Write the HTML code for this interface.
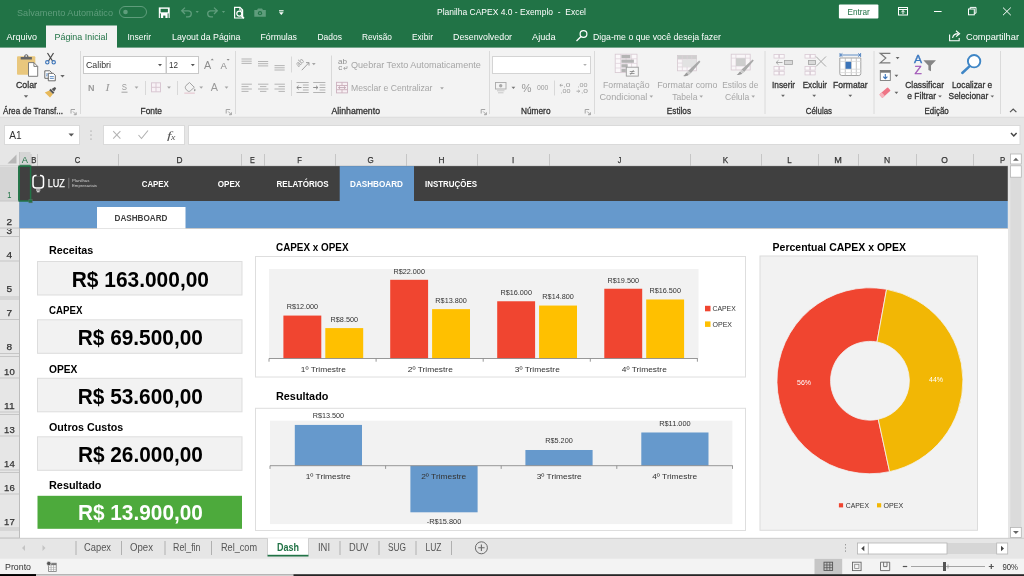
<!DOCTYPE html>
<html><head><meta charset="utf-8"><title>Planilha CAPEX 4.0 - Exemplo - Excel</title>
<style>
html,body{margin:0;padding:0;background:#fff;overflow:hidden}
body{width:1024px;height:576px;font-family:"Liberation Sans",sans-serif}
svg{display:block;font-family:"Liberation Sans",sans-serif;will-change:transform;transform:translateZ(0)}
text{white-space:pre}
</style></head><body>
<svg width="1024" height="576" viewBox="0 0 1024 576">
<rect x="0" y="0" width="1024" height="576" fill="#ffffff" />
<rect x="0" y="0" width="1024" height="48.1" fill="#217346" />
<rect x="0" y="47.6" width="1024" height="69.4" fill="#f3f3f3" />
<rect x="0" y="117" width="1024" height="35.5" fill="#e6e6e6" />
<line x1="0" y1="117.2" x2="1024" y2="117.2" stroke="#d9d9d9" stroke-width="0.8" />
<rect x="46" y="25.5" width="71" height="24" fill="#f3f3f3" />
<text x="17" y="16" font-size="9.8" fill="#5f9d7c" textLength="96" lengthAdjust="spacingAndGlyphs" >Salvamento Automático</text>
<rect x="119.5" y="6.5" width="27" height="11" rx="5.5" fill="none" stroke="#5f9d7c"/>
<circle cx="125.5" cy="12" r="2.3" fill="#5f9d7c"/>
<rect x="158.8" y="7.4" width="10.9" height="10.6" fill="#fff" />
<rect x="160.6" y="8.8" width="7.3" height="3.5" fill="#217346" />
<rect x="159.9" y="13.4" width="1" height="4.6" fill="#217346" />
<rect x="167.6" y="13.4" width="1" height="4.6" fill="#217346" />
<rect x="163.2" y="15.6" width="2.2" height="2.4" fill="#217346" />
<path d="M182 10.8h6.3a3 3 0 0 1 0 6h-2.3 M185 7.6l-3.3 3.2 3.3 3.2" fill="none" stroke="#5f9d7c" stroke-width="1.3" />
<path d="M195.6 11l1.6 2 1.6-2z" fill="#5f9d7c" />
<path d="M217 10.8h-6.3a3 3 0 0 0 0 6h2.3 M214 7.6l3.3 3.2-3.3 3.2" fill="none" stroke="#5f9d7c" stroke-width="1.3" />
<path d="M221.9 11l1.6 2 1.6-2z" fill="#5f9d7c" />
<path d="M234.6 7.4h5.4l2.6 2.6v8h-8z" fill="none" stroke="#fff" stroke-width="1.2" />
<path d="M239.8 7.4v2.8h2.8" fill="none" stroke="#fff" stroke-width="0.9" />
<circle cx="239.3" cy="13.6" r="2.5" fill="#217346" stroke="#fff" stroke-width="1.2"/>
<line x1="241.2" y1="15.6" x2="244" y2="18.4" stroke="#fff" stroke-width="1.5" />
<path d="M254.3 10h2.7l1-1.6h4l1 1.6h2.8v6.8h-11.5z" fill="#5f9d7c" />
<circle cx="260" cy="13.2" r="2.1" fill="#217346"/>
<circle cx="260" cy="13.2" r="1" fill="#5f9d7c"/>
<line x1="279" y1="10.8" x2="283.6" y2="10.8" stroke="#fff" stroke-width="1.1" />
<path d="M279 12.3h4.6l-2.3 2.6z" fill="#fff" />
<text x="437" y="15.1" font-size="9.8" fill="#fff" textLength="149" lengthAdjust="spacingAndGlyphs" >Planilha CAPEX 4.0 - Exemplo  -  Excel</text>
<rect x="838.9" y="4.5" width="39.5" height="14" fill="#fff" rx="1"/>
<text x="847.5" y="15" font-size="9.8" fill="#217346" textLength="22.3" lengthAdjust="spacingAndGlyphs" >Entrar</text>
<rect x="898.5" y="7.5" width="9" height="7.5" fill="none" stroke="#fff" stroke-width="1" />
<line x1="898.5" y1="9.5" x2="907.5" y2="9.5" stroke="#fff" stroke-width="1" />
<path d="M903 10.5v3.5 M901.3 12.3l1.7-1.8 1.7 1.8" fill="none" stroke="#fff" stroke-width="1" />
<line x1="934" y1="11.5" x2="941.6" y2="11.5" stroke="#fff" stroke-width="1" />
<rect x="968.5" y="9" width="5.8" height="5.8" fill="none" stroke="#fff" stroke-width="1" />
<path d="M970.2 9v-1.6h5.8v5.8h-1.7" fill="none" stroke="#fff" stroke-width="1" />
<path d="M1003 7.6l7.8 7.6 M1010.8 7.6l-7.8 7.6" fill="none" stroke="#fff" stroke-width="1" />
<text x="6.5" y="40" font-size="9.8" fill="#fff" textLength="30.5" lengthAdjust="spacingAndGlyphs" >Arquivo</text>
<text x="54.5" y="40" font-size="9.8" fill="#217346" textLength="53" lengthAdjust="spacingAndGlyphs" >Página Inicial</text>
<text x="127.5" y="40" font-size="9.8" fill="#fff" textLength="23.5" lengthAdjust="spacingAndGlyphs" >Inserir</text>
<text x="172" y="40" font-size="9.8" fill="#fff" textLength="68.5" lengthAdjust="spacingAndGlyphs" >Layout da Página</text>
<text x="260.5" y="40" font-size="9.8" fill="#fff" textLength="36.5" lengthAdjust="spacingAndGlyphs" >Fórmulas</text>
<text x="317.5" y="40" font-size="9.8" fill="#fff" textLength="24.5" lengthAdjust="spacingAndGlyphs" >Dados</text>
<text x="362" y="40" font-size="9.8" fill="#fff" textLength="30" lengthAdjust="spacingAndGlyphs" >Revisão</text>
<text x="412" y="40" font-size="9.8" fill="#fff" textLength="21" lengthAdjust="spacingAndGlyphs" >Exibir</text>
<text x="453" y="40" font-size="9.8" fill="#fff" textLength="59" lengthAdjust="spacingAndGlyphs" >Desenvolvedor</text>
<text x="532" y="40" font-size="9.8" fill="#fff" textLength="23.5" lengthAdjust="spacingAndGlyphs" >Ajuda</text>
<circle cx="583.5" cy="34" r="3.4" fill="none" stroke="#fff" stroke-width="1.2"/>
<line x1="581" y1="36.5" x2="576.5" y2="41" stroke="#fff" stroke-width="1.3" />
<text x="593" y="40" font-size="9.8" fill="#fff" textLength="128" lengthAdjust="spacingAndGlyphs" >Diga-me o que você deseja fazer</text>
<path d="M949.6 34.5v6.2h9.6v-2.6 M952.6 38c.4-3 2.6-4.4 5.6-4.4 M956 30.8l3.6 2.9-3.6 2.9" fill="none" stroke="#fff" stroke-width="1.1" />
<text x="966" y="40" font-size="9.8" fill="#fff" textLength="53" lengthAdjust="spacingAndGlyphs" >Compartilhar</text>
<rect x="4.5" y="125.5" width="75" height="19" fill="#fff" stroke="#dadada" stroke-width="1" />
<text x="9.2" y="138.6" font-size="10.2" fill="#333" textLength="12.4" lengthAdjust="spacingAndGlyphs" >A1</text>
<path d="M68.5 133.5h5.5l-2.75 3z" fill="#555" />
<rect x="90.5" y="130.5" width="1" height="1.2" fill="#9a9a9a" />
<rect x="90.5" y="134.5" width="1" height="1.2" fill="#9a9a9a" />
<rect x="90.5" y="138.5" width="1" height="1.2" fill="#9a9a9a" />
<rect x="103.5" y="125.5" width="81" height="19" fill="#fff" stroke="#dadada" stroke-width="1" />
<path d="M113.2 131.2l7.2 7.4 M120.4 131.2l-7.2 7.4" fill="none" stroke="#b4b4b4" stroke-width="1.1" />
<path d="M138.5 135l3 3.5 6.5-8" fill="none" stroke="#b0b0b0" stroke-width="1.1" />
<text x="167" y="139" font-size="11" fill="#555" font-style="italic" textLength="4.5" lengthAdjust="spacingAndGlyphs" font-family="Liberation Serif">f</text>
<text x="171" y="140" font-size="7.5" fill="#555" font-style="italic" textLength="4.4" lengthAdjust="spacingAndGlyphs" font-family="Liberation Serif">x</text>
<rect x="188.5" y="125.5" width="831.5" height="19" fill="#fff" stroke="#dadada" stroke-width="1" />
<path d="M1011 133l2.8 2.9 2.8-2.9" fill="none" stroke="#444" stroke-width="1.5" />
<rect x="17" y="56.3" width="18.3" height="18.4" fill="#e9c77d" rx="1"/>
<path d="M20.7 59.5v-2.6h3.4c0-3.4 4.4-3.4 4.4 0h3.4v2.6z" fill="#666" />
<rect x="25.5" y="55.3" width="1.6" height="1.4" fill="#f3f3f3" />
<path d="M28.5 62.6h5.4l3.8 3.8v9.9h-9.2z" fill="#fff" stroke="#6f6f6f" stroke-width="0.9" />
<path d="M33.9 62.6v3.8h3.8" fill="none" stroke="#6f6f6f" stroke-width="0.9" />
<text x="16" y="88" font-size="9.8" fill="#303030" stroke="#303030" stroke-width="0.3" textLength="21" lengthAdjust="spacingAndGlyphs" >Colar</text>
<path d="M23.8 95.3h4.4l-2.2 2.5z" fill="#666" />
<path d="M47.5 53l5 8 M53.5 53l-5 8" fill="none" stroke="#4a4a4a" stroke-width="1.2" />
<circle cx="47.3" cy="62.3" r="1.7" fill="none" stroke="#3b74b9" stroke-width="1.1"/>
<circle cx="53.7" cy="62.3" r="1.7" fill="none" stroke="#3b74b9" stroke-width="1.1"/>
<path d="M44.8 70.8h5l1.7 1.7v5.8h-6.7z" fill="#fff" stroke="#5c5c5c" stroke-width="0.9" />
<path d="M48.3 73.3h5l2 2v5.5h-7z" fill="#fff" stroke="#5c5c5c" stroke-width="0.9" />
<line x1="49.8" y1="76.6" x2="53.8" y2="76.6" stroke="#3b74b9" stroke-width="0.8" />
<line x1="49.8" y1="78.4" x2="53.8" y2="78.4" stroke="#3b74b9" stroke-width="0.8" />
<line x1="46" y1="74" x2="48" y2="74" stroke="#3b74b9" stroke-width="0.8" />
<line x1="46" y1="75.8" x2="47.6" y2="75.8" stroke="#3b74b9" stroke-width="0.8" />
<path d="M60.3 75.1h4.4l-2.2 2.5z" fill="#666" />
<path d="M44.8 92.6l4.6-2.2 3.6 3.6-3 3.6z" fill="#e7b95a" />
<path d="M49.2 90.2l1.4-1.4 3.8 3.8-1.4 1.4z" fill="#555" />
<path d="M51.6 88.9l3.2-2 1.4 1.4-2 3.2z" fill="#555" />
<text x="3" y="113.9" font-size="9.8" fill="#303030" stroke="#303030" stroke-width="0.3" textLength="60" lengthAdjust="spacingAndGlyphs" >Área de Transf...</text>
<path d="M71 113.5v-4h4" fill="none" stroke="#9c9c9c" stroke-width="0.9" />
<path d="M73 111.5l3 3 M76.2 112.3v2.4h-2.4" fill="none" stroke="#9c9c9c" stroke-width="0.9" />
<line x1="80.5" y1="51" x2="80.5" y2="114" stroke="#dadada" stroke-width="1" />
<rect x="83.5" y="56.5" width="82.5" height="17" fill="#fff" stroke="#c8c8c8" stroke-width="1" />
<rect x="166.5" y="56.5" width="32" height="17" fill="#fff" stroke="#c8c8c8" stroke-width="1" />
<text x="86" y="68" font-size="9.8" fill="#333" textLength="25" lengthAdjust="spacingAndGlyphs" >Calibri</text>
<path d="M158 64h4l-2 2.3z" fill="#555" />
<text x="169" y="68" font-size="9.8" fill="#333" textLength="9" lengthAdjust="spacingAndGlyphs" >12</text>
<path d="M190.8 64h4l-2 2.3z" fill="#555" />
<text x="204" y="69" font-size="10.5" fill="#8c8c8c" textLength="7.2" lengthAdjust="spacingAndGlyphs" >A</text>
<path d="M210.6 60.2l1.6-1.8 1.6 1.8z" fill="#8c8c8c" />
<text x="220.5" y="69" font-size="9.2" fill="#8c8c8c" textLength="6.4" lengthAdjust="spacingAndGlyphs" >A</text>
<path d="M226.6 59l1.5 1.7 1.5-1.7z" fill="#8c8c8c" />
<text x="88" y="90.5" font-size="9.4" fill="#9a9a9a" font-weight="700" textLength="6.5" lengthAdjust="spacingAndGlyphs" >N</text>
<text x="105.5" y="90.5" font-size="9.4" fill="#9a9a9a" font-style="italic" textLength="4" lengthAdjust="spacingAndGlyphs" font-family="Liberation Serif">I</text>
<text x="121.8" y="90.3" font-size="9.4" fill="#9a9a9a" textLength="5.2" lengthAdjust="spacingAndGlyphs" >S</text>
<line x1="121.5" y1="92.2" x2="127.5" y2="92.2" stroke="#9a9a9a" stroke-width="0.9" />
<path d="M134.6 86.6h3.8l-1.9 2.2z" fill="#a6a6a6" />
<line x1="145.5" y1="81" x2="145.5" y2="95" stroke="#d8d8d8" stroke-width="1" />
<rect x="151.5" y="82.8" width="9" height="9" fill="#f8f2f6" stroke="#d9c8d3" stroke-width="1" />
<line x1="156" y1="82.8" x2="156" y2="91.8" stroke="#d9c8d3" stroke-width="1" />
<line x1="151.5" y1="87.3" x2="160.5" y2="87.3" stroke="#d9c8d3" stroke-width="1" />
<path d="M167.1 86.6h3.8l-1.9 2.2z" fill="#a6a6a6" />
<line x1="177.5" y1="81" x2="177.5" y2="95" stroke="#d8d8d8" stroke-width="1" />
<path d="M186 85.5l3.5-3 4.8 4.8-4 3.6c-1 .8-2.2.6-2.9-.1l-1.6-1.8c-.7-.9-.7-2.5.2-3.5z" fill="none" stroke="#9a9a9a" stroke-width="0.9" />
<path d="M194.8 88.6c.8 1.2 1.2 2 .1 2.6-.9.3-1.5-.7-.1-2.6z" fill="#9a9a9a" />
<rect x="184.3" y="92.4" width="10.5" height="1.6" fill="#e9d3da" />
<path d="M199.3 86.6h3.8l-1.9 2.2z" fill="#a6a6a6" />
<text x="210.8" y="91" font-size="10.5" fill="#9a9a9a" textLength="7.2" lengthAdjust="spacingAndGlyphs" >A</text>
<path d="M224.6 86.6h3.8l-1.9 2.2z" fill="#a6a6a6" />
<text x="140.5" y="113.9" font-size="9.8" fill="#303030" stroke="#303030" stroke-width="0.3" textLength="21.5" lengthAdjust="spacingAndGlyphs" >Fonte</text>
<path d="M226.2 113.5v-4h4" fill="none" stroke="#9c9c9c" stroke-width="0.9" />
<path d="M228.2 111.5l3 3 M231.4 112.3v2.4h-2.4" fill="none" stroke="#9c9c9c" stroke-width="0.9" />
<line x1="235.5" y1="51" x2="235.5" y2="114" stroke="#dadada" stroke-width="1" />
<line x1="241.5" y1="59" x2="251.7" y2="59" stroke="#adadad" stroke-width="0.9" />
<line x1="241.5" y1="61.2" x2="251.7" y2="61.2" stroke="#adadad" stroke-width="0.9" />
<line x1="241.5" y1="63.4" x2="251.7" y2="63.4" stroke="#adadad" stroke-width="0.9" />
<line x1="258" y1="61.5" x2="268.2" y2="61.5" stroke="#adadad" stroke-width="0.9" />
<line x1="258" y1="63.7" x2="268.2" y2="63.7" stroke="#adadad" stroke-width="0.9" />
<line x1="258" y1="65.9" x2="268.2" y2="65.9" stroke="#adadad" stroke-width="0.9" />
<line x1="274.5" y1="65.6" x2="284.7" y2="65.6" stroke="#adadad" stroke-width="0.9" />
<line x1="274.5" y1="67.8" x2="284.7" y2="67.8" stroke="#adadad" stroke-width="0.9" />
<line x1="274.5" y1="70" x2="284.7" y2="70" stroke="#adadad" stroke-width="0.9" />
<line x1="291.5" y1="56.5" x2="291.5" y2="72.5" stroke="#d8d8d8" stroke-width="1" />
<text x="0" y="0" font-size="7.6" fill="#969696" textLength="8.4" lengthAdjust="spacingAndGlyphs" transform="translate(298.6,67.2) rotate(-45)">ab</text>
<path d="M301.8 70.2l7-7.4 M309 65.6v-3h-3" fill="none" stroke="#969696" stroke-width="0.9" />
<path d="M311.9 63.1h3.8l-1.9 2.2z" fill="#a6a6a6" />
<line x1="331.5" y1="55.5" x2="331.5" y2="96" stroke="#d8d8d8" stroke-width="1" />
<text x="338" y="64.4" font-size="8" fill="#8f8f8f" textLength="9" lengthAdjust="spacingAndGlyphs" >ab</text>
<text x="338.2" y="70.4" font-size="8" fill="#8f8f8f" textLength="4" lengthAdjust="spacingAndGlyphs" >c</text>
<path d="M347 66.2v2.2h-3.2 M345.2 67l-1.5 1.4 1.5 1.4" fill="none" stroke="#9a9a9a" stroke-width="0.8" />
<text x="351" y="67.8" font-size="9.8" fill="#a6a6a6" textLength="129.8" lengthAdjust="spacingAndGlyphs" >Quebrar Texto Automaticamente</text>
<line x1="241.5" y1="84.2" x2="251.9" y2="84.2" stroke="#adadad" stroke-width="0.9" />
<line x1="258" y1="84.2" x2="268.4" y2="84.2" stroke="#adadad" stroke-width="0.9" />
<line x1="274.5" y1="84.2" x2="284.9" y2="84.2" stroke="#adadad" stroke-width="0.9" />
<line x1="241.5" y1="86.6" x2="248.5" y2="86.6" stroke="#adadad" stroke-width="0.9" />
<line x1="260" y1="86.6" x2="266.4" y2="86.6" stroke="#adadad" stroke-width="0.9" />
<line x1="278.5" y1="86.6" x2="284.9" y2="86.6" stroke="#adadad" stroke-width="0.9" />
<line x1="241.5" y1="89" x2="251.9" y2="89" stroke="#adadad" stroke-width="0.9" />
<line x1="258" y1="89" x2="268.4" y2="89" stroke="#adadad" stroke-width="0.9" />
<line x1="274.5" y1="89" x2="284.9" y2="89" stroke="#adadad" stroke-width="0.9" />
<line x1="241.5" y1="91.4" x2="248.5" y2="91.4" stroke="#adadad" stroke-width="0.9" />
<line x1="260" y1="91.4" x2="266.4" y2="91.4" stroke="#adadad" stroke-width="0.9" />
<line x1="278.5" y1="91.4" x2="284.9" y2="91.4" stroke="#adadad" stroke-width="0.9" />
<line x1="291.5" y1="80" x2="291.5" y2="96" stroke="#d8d8d8" stroke-width="1" />
<line x1="296.5" y1="82.5" x2="308.7" y2="82.5" stroke="#adadad" stroke-width="0.9" />
<line x1="296.5" y1="92.5" x2="308.7" y2="92.5" stroke="#adadad" stroke-width="0.9" />
<line x1="302.9" y1="85" x2="308.7" y2="85" stroke="#adadad" stroke-width="0.9" />
<line x1="302.9" y1="87.5" x2="308.7" y2="87.5" stroke="#adadad" stroke-width="0.9" />
<line x1="302.9" y1="90" x2="308.7" y2="90" stroke="#adadad" stroke-width="0.9" />
<path d="M301.5 87.5h-4.6 M298.7 85.7l-1.9 1.8 1.9 1.8" fill="none" stroke="#858585" stroke-width="0.9" />
<line x1="313.2" y1="82.5" x2="325.4" y2="82.5" stroke="#adadad" stroke-width="0.9" />
<line x1="313.2" y1="92.5" x2="325.4" y2="92.5" stroke="#adadad" stroke-width="0.9" />
<line x1="319.6" y1="85" x2="325.4" y2="85" stroke="#adadad" stroke-width="0.9" />
<line x1="319.6" y1="87.5" x2="325.4" y2="87.5" stroke="#adadad" stroke-width="0.9" />
<line x1="319.6" y1="90" x2="325.4" y2="90" stroke="#adadad" stroke-width="0.9" />
<path d="M313.2 87.5h4.6 M316 85.7l1.9 1.8-1.9 1.8" fill="none" stroke="#858585" stroke-width="0.9" />
<rect x="336.5" y="82.3" width="11" height="10.6" fill="#f8f0f4" stroke="#cdb3c0" stroke-width="0.9" />
<line x1="336.5" y1="85.5" x2="347.5" y2="85.5" stroke="#c9aeb9" stroke-width="0.9" />
<line x1="336.5" y1="89.7" x2="347.5" y2="89.7" stroke="#c9aeb9" stroke-width="0.9" />
<line x1="342" y1="82.3" x2="342" y2="85.5" stroke="#c9aeb9" stroke-width="0.9" />
<line x1="342" y1="89.7" x2="342" y2="92.9" stroke="#c9aeb9" stroke-width="0.9" />
<path d="M338.5 87.6h7 M340 86.4l-1.4 1.2 1.4 1.2 M344 86.4l1.4 1.2-1.4 1.2" fill="none" stroke="#b89aa8" stroke-width="0.8" />
<text x="351" y="91.4" font-size="9.8" fill="#a6a6a6" textLength="81.5" lengthAdjust="spacingAndGlyphs" >Mesclar e Centralizar</text>
<path d="M440.1 87.3h3.8l-1.9 2.2z" fill="#a6a6a6" />
<text x="331.5" y="113.9" font-size="9.8" fill="#303030" stroke="#303030" stroke-width="0.3" textLength="48.5" lengthAdjust="spacingAndGlyphs" >Alinhamento</text>
<path d="M481.2 113.5v-4h4" fill="none" stroke="#9c9c9c" stroke-width="0.9" />
<path d="M483.2 111.5l3 3 M486.4 112.3v2.4h-2.4" fill="none" stroke="#9c9c9c" stroke-width="0.9" />
<line x1="489.5" y1="51" x2="489.5" y2="114" stroke="#dadada" stroke-width="1" />
<rect x="492.5" y="56.5" width="98" height="17" fill="#fff" stroke="#d4d4d4" stroke-width="1" />
<path d="M583.2 64h3.6l-1.8 2.1z" fill="#b0b0b0" />
<rect x="495.5" y="82.5" width="10.5" height="6.5" fill="#f3f3f3" stroke="#a9a9a9" stroke-width="0.9" />
<circle cx="500.7" cy="85.7" r="1.7" fill="#a9a9a9"/>
<line x1="497" y1="90.8" x2="504.5" y2="90.8" stroke="#c2c2c2" stroke-width="0.9" />
<line x1="498" y1="92.8" x2="503.5" y2="92.8" stroke="#c2c2c2" stroke-width="0.9" />
<path d="M511.5 86.8h3.8l-1.9 2.2z" fill="#777" />
<text x="521.5" y="92" font-size="11" fill="#9a9a9a" textLength="10" lengthAdjust="spacingAndGlyphs" >%</text>
<text x="537" y="90" font-size="7" fill="#9a9a9a" textLength="11.4" lengthAdjust="spacingAndGlyphs" >000</text>
<line x1="554.5" y1="80.5" x2="554.5" y2="95.5" stroke="#d8d8d8" stroke-width="1" />
<text x="563.5" y="87" font-size="6.2" fill="#9a9a9a" textLength="7" lengthAdjust="spacingAndGlyphs" >,0</text>
<text x="560.5" y="92.8" font-size="6.2" fill="#9a9a9a" textLength="10" lengthAdjust="spacingAndGlyphs" >,00</text>
<path d="M563 85.3h-3 M561.2 84l-1.4 1.3 1.4 1.3" fill="none" stroke="#9a9a9a" stroke-width="0.8" />
<text x="577.5" y="87" font-size="6.2" fill="#9a9a9a" textLength="10" lengthAdjust="spacingAndGlyphs" >,00</text>
<text x="581" y="92.8" font-size="6.2" fill="#9a9a9a" textLength="7" lengthAdjust="spacingAndGlyphs" >,0</text>
<path d="M576.5 91.2h3 M578.3 89.9l1.4 1.3-1.4 1.3" fill="none" stroke="#9a9a9a" stroke-width="0.8" />
<text x="521" y="113.9" font-size="9.8" fill="#303030" stroke="#303030" stroke-width="0.3" textLength="29.5" lengthAdjust="spacingAndGlyphs" >Número</text>
<path d="M585.2 113.5v-4h4" fill="none" stroke="#9c9c9c" stroke-width="0.9" />
<path d="M587.2 111.5l3 3 M590.4 112.3v2.4h-2.4" fill="none" stroke="#9c9c9c" stroke-width="0.9" />
<line x1="594.5" y1="51" x2="594.5" y2="114" stroke="#dadada" stroke-width="1" />
<rect x="615.2" y="54.2" width="21.8" height="18.4" fill="#fbf8fa" stroke="#d6c8d0" stroke-width="0.8" />
<line x1="620.65" y1="54.2" x2="620.65" y2="72.6" stroke="#ddd0d8" stroke-width="0.7" />
<line x1="626.1" y1="54.2" x2="626.1" y2="72.6" stroke="#ddd0d8" stroke-width="0.7" />
<line x1="631.55" y1="54.2" x2="631.55" y2="72.6" stroke="#ddd0d8" stroke-width="0.7" />
<line x1="615.2" y1="58.8" x2="637" y2="58.8" stroke="#ddd0d8" stroke-width="0.7" />
<line x1="615.2" y1="63.4" x2="637" y2="63.4" stroke="#ddd0d8" stroke-width="0.7" />
<line x1="615.2" y1="68" x2="637" y2="68" stroke="#ddd0d8" stroke-width="0.7" />
<rect x="621.4" y="55" width="9" height="3.2" fill="#b4b4b4" />
<rect x="621.4" y="59.6" width="12.5" height="3.2" fill="#b4b4b4" />
<rect x="621.4" y="64.2" width="6.3" height="3.2" fill="#b4b4b4" />
<rect x="621.4" y="68.8" width="4.4" height="3.2" fill="#b4b4b4" />
<rect x="626.3" y="67.2" width="12" height="8.9" fill="#f6f6f6" stroke="#9c9c9c" stroke-width="0.9" />
<text x="629.6" y="74.6" font-size="8" fill="#808080" textLength="5.4" lengthAdjust="spacingAndGlyphs" >≠</text>
<text x="603" y="88.2" font-size="9.8" fill="#a6a6a6" textLength="46.5" lengthAdjust="spacingAndGlyphs" >Formatação</text>
<text x="599.5" y="99.7" font-size="9.8" fill="#a6a6a6" textLength="47.8" lengthAdjust="spacingAndGlyphs" >Condicional</text>
<path d="M649.5 95.6h3.6l-1.8 2.1z" fill="#a6a6a6" />
<rect x="677.6" y="55.4" width="19" height="15.4" fill="#f9f6f8" stroke="#d6c8d0" stroke-width="0.8" />
<rect x="677.6" y="55.4" width="19" height="3.6" fill="#cfcfcf" />
<line x1="682.35" y1="55.4" x2="682.35" y2="70.8" stroke="#ddd0d8" stroke-width="0.7" />
<line x1="687.1" y1="55.4" x2="687.1" y2="70.8" stroke="#ddd0d8" stroke-width="0.7" />
<line x1="691.85" y1="55.4" x2="691.85" y2="70.8" stroke="#ddd0d8" stroke-width="0.7" />
<line x1="677.6" y1="59.25" x2="696.6" y2="59.25" stroke="#ddd0d8" stroke-width="0.7" />
<line x1="677.6" y1="63.1" x2="696.6" y2="63.1" stroke="#ddd0d8" stroke-width="0.7" />
<line x1="677.6" y1="66.95" x2="696.6" y2="66.95" stroke="#ddd0d8" stroke-width="0.7" />
<rect x="682.4" y="59.3" width="14" height="7.6" fill="#e2e2e2" />
<path d="M699.2 60.6l1.2 1.2-9.6 11.4-2.6-2.4z" fill="#a9a9a9" />
<path d="M688.2 70.8l2.6 2.4-1.6 1.6-2.4-2.4z" fill="#c9c9c9" />
<path d="M686.6 72.6l2.2 2.2c-1.6 1.6-3.6 1.6-5.6 1.2 1.6-.6 1.8-2 3.4-3.4z" fill="#9a9a9a" />
<text x="657.2" y="88.2" font-size="9.8" fill="#a6a6a6" textLength="60.2" lengthAdjust="spacingAndGlyphs" >Formatar como</text>
<text x="672.2" y="99.7" font-size="9.8" fill="#a6a6a6" textLength="25.2" lengthAdjust="spacingAndGlyphs" >Tabela</text>
<path d="M699.4 95.6h3.6l-1.8 2.1z" fill="#a6a6a6" />
<rect x="731.2" y="54.2" width="19" height="15.8" fill="#f9f6f8" stroke="#d6c8d0" stroke-width="0.8" />
<line x1="735.95" y1="54.2" x2="735.95" y2="70" stroke="#ddd0d8" stroke-width="0.7" />
<line x1="745.45" y1="54.2" x2="745.45" y2="70" stroke="#ddd0d8" stroke-width="0.7" />
<line x1="731.2" y1="58.15" x2="750.2" y2="58.15" stroke="#ddd0d8" stroke-width="0.7" />
<line x1="731.2" y1="66.05" x2="750.2" y2="66.05" stroke="#ddd0d8" stroke-width="0.7" />
<rect x="736" y="58.2" width="9.5" height="7.8" fill="#cdcdcd" />
<path d="M752.6 59.4l1.2 1.2-9.6 11.4-2.6-2.4z" fill="#a9a9a9" />
<path d="M741.6 69.6l2.6 2.4-1.6 1.6-2.4-2.4z" fill="#c9c9c9" />
<path d="M740 71.4l2.2 2.2c-1.6 1.6-3.6 1.6-5.6 1.2 1.6-.6 1.8-2 3.4-3.4z" fill="#9a9a9a" />
<text x="722.3" y="88.2" font-size="9.8" fill="#a6a6a6" textLength="36" lengthAdjust="spacingAndGlyphs" >Estilos de</text>
<text x="725" y="99.7" font-size="9.8" fill="#a6a6a6" textLength="24.3" lengthAdjust="spacingAndGlyphs" >Célula</text>
<path d="M751.4 95.6h3.6l-1.8 2.1z" fill="#a6a6a6" />
<text x="666.8" y="113.9" font-size="9.8" fill="#303030" stroke="#303030" stroke-width="0.3" textLength="24.2" lengthAdjust="spacingAndGlyphs" >Estilos</text>
<line x1="765" y1="51" x2="765" y2="114" stroke="#dadada" stroke-width="1" />
<rect x="774" y="54.5" width="4.8" height="3.6" fill="#fbf8fa" stroke="#d9cad4" stroke-width="0.8" />
<rect x="779.4" y="54.5" width="4.8" height="3.6" fill="#fbf8fa" stroke="#d9cad4" stroke-width="0.8" />
<rect x="774" y="66.5" width="4.8" height="3.6" fill="#fbf8fa" stroke="#d9cad4" stroke-width="0.8" />
<rect x="779.4" y="66.5" width="4.8" height="3.6" fill="#fbf8fa" stroke="#d9cad4" stroke-width="0.8" />
<rect x="774" y="71.3" width="4.8" height="3.6" fill="#fbf8fa" stroke="#d9cad4" stroke-width="0.8" />
<rect x="779.4" y="71.3" width="4.8" height="3.6" fill="#fbf8fa" stroke="#d9cad4" stroke-width="0.8" />
<rect x="784.5" y="60.5" width="8" height="4" fill="#d9d9d9" stroke="#a3a3a3" stroke-width="0.8" />
<path d="M782.5 62.5h-6.5 M778.5 60.3l-2.4 2.2 2.4 2.2" fill="none" stroke="#a3a3a3" stroke-width="0.9" />
<text x="772" y="87.8" font-size="9.8" fill="#303030" stroke="#303030" stroke-width="0.3" textLength="23" lengthAdjust="spacingAndGlyphs" >Inserir</text>
<path d="M781.1 94.8h3.8l-1.9 2.2z" fill="#666" />
<rect x="805" y="54.5" width="4.8" height="3.6" fill="#fbf8fa" stroke="#d9cad4" stroke-width="0.8" />
<rect x="810.4" y="54.5" width="4.8" height="3.6" fill="#fbf8fa" stroke="#d9cad4" stroke-width="0.8" />
<rect x="805" y="66.5" width="4.8" height="3.6" fill="#fbf8fa" stroke="#d9cad4" stroke-width="0.8" />
<rect x="810.4" y="66.5" width="4.8" height="3.6" fill="#fbf8fa" stroke="#d9cad4" stroke-width="0.8" />
<rect x="805" y="71.3" width="4.8" height="3.6" fill="#fbf8fa" stroke="#d9cad4" stroke-width="0.8" />
<rect x="810.4" y="71.3" width="4.8" height="3.6" fill="#fbf8fa" stroke="#d9cad4" stroke-width="0.8" />
<rect x="808.5" y="60.5" width="7" height="4" fill="#d9d9d9" stroke="#a3a3a3" stroke-width="0.8" />
<path d="M816 56.5l10 10 M826 56.5l-10 10" fill="none" stroke="#a8a8a8" stroke-width="1" />
<text x="802.7" y="87.8" font-size="9.8" fill="#303030" stroke="#303030" stroke-width="0.3" textLength="24.3" lengthAdjust="spacingAndGlyphs" >Excluir</text>
<path d="M812.3 94.8h3.8l-1.9 2.2z" fill="#666" />
<path d="M840.2 55h20 M840 53v4 M860.6 53v4 M842.4 53.4l-2 1.6 2 1.6 M858.2 53.4l2 1.6-2 1.6" fill="none" stroke="#3b74b9" stroke-width="0.8" />
<path d="M839.8 58h21v15.5a2 2 0 0 1-2 2h-17a2 2 0 0 1-2-2z" fill="#fff" stroke="#9a9a9a" stroke-width="0.9" />
<line x1="845.3" y1="58" x2="845.3" y2="75.5" stroke="#b5b5b5" stroke-width="0.8" />
<line x1="851.3" y1="58" x2="851.3" y2="75.5" stroke="#b5b5b5" stroke-width="0.8" />
<line x1="856.3" y1="58" x2="856.3" y2="75.5" stroke="#b5b5b5" stroke-width="0.8" />
<line x1="839.8" y1="61.4" x2="860.8" y2="61.4" stroke="#d5d5d5" stroke-width="0.8" />
<line x1="839.8" y1="69.2" x2="860.8" y2="69.2" stroke="#d5d5d5" stroke-width="0.8" />
<line x1="839.8" y1="72.6" x2="860.8" y2="72.6" stroke="#d5d5d5" stroke-width="0.8" />
<rect x="845.6" y="61.8" width="5.5" height="7" fill="#3b74b9" />
<text x="833" y="87.8" font-size="9.8" fill="#303030" stroke="#303030" stroke-width="0.3" textLength="34.7" lengthAdjust="spacingAndGlyphs" >Formatar</text>
<path d="M848.4 94.8h3.8l-1.9 2.2z" fill="#666" />
<text x="805.7" y="113.9" font-size="9.8" fill="#303030" stroke="#303030" stroke-width="0.3" textLength="26.3" lengthAdjust="spacingAndGlyphs" >Células</text>
<line x1="874" y1="51" x2="874" y2="114" stroke="#dadada" stroke-width="1" />
<path d="M890.4 53.3h-10.2l5.6 4.8-5.6 4.8h10.2" fill="none" stroke="#7a7a7a" stroke-width="1.2" />
<path d="M895.7 57.1h3.8l-1.9 2.2z" fill="#666" />
<rect x="880.3" y="70.5" width="10" height="10" fill="#fff" stroke="#7a7a7a" stroke-width="0.9" />
<rect x="880.3" y="70.5" width="10" height="2.2" fill="#7a7a7a" />
<path d="M885.3 74v4.6 M883.2 76.6l2.1 2.1 2.1-2.1" fill="none" stroke="#3b74b9" stroke-width="1.1" />
<path d="M894.5 74.8h3.8l-1.9 2.2z" fill="#666" />
<g transform="translate(885 92.6) rotate(-42)"><rect x="-5.6" y="-2.3" width="11.2" height="4.6" rx=".8" fill="#ee7586"/><rect x="-5.6" y="-2.3" width="3.4" height="4.6" rx=".8" fill="#f6b3bd"/></g>
<path d="M894.5 91.8h3.8l-1.9 2.2z" fill="#666" />
<text x="913.9" y="63.4" font-size="11.8" fill="#3b78c0" textLength="8.1" lengthAdjust="spacingAndGlyphs" stroke="#3b78c0" stroke-width=".35">A</text>
<text x="914.5" y="73.9" font-size="11.6" fill="#a259b8" textLength="7.2" lengthAdjust="spacingAndGlyphs" stroke="#a259b8" stroke-width=".35">Z</text>
<path d="M923.3 60.2h12.7l-5 5.3v5.8l-2.6-1.400v-4.4z" fill="#858585" />
<text x="905.2" y="87.8" font-size="9.8" fill="#303030" stroke="#303030" stroke-width="0.3" textLength="38.8" lengthAdjust="spacingAndGlyphs" >Classificar</text>
<text x="907.3" y="99.3" font-size="9.8" fill="#303030" stroke="#303030" stroke-width="0.3" textLength="28.7" lengthAdjust="spacingAndGlyphs" >e Filtrar</text>
<path d="M938.2 95.4h3.6l-1.8 2.1z" fill="#666" />
<circle cx="974.1" cy="61.2" r="6.2" fill="#fff" stroke="#3f86c6" stroke-width="1.9"/>
<line x1="969.4" y1="66.3" x2="962.3" y2="73" stroke="#3f86c6" stroke-width="2.5" stroke-linecap="round"/>
<text x="952" y="87.8" font-size="9.8" fill="#303030" stroke="#303030" stroke-width="0.3" textLength="40.2" lengthAdjust="spacingAndGlyphs" >Localizar e</text>
<text x="948.6" y="99.3" font-size="9.8" fill="#303030" stroke="#303030" stroke-width="0.3" textLength="39.6" lengthAdjust="spacingAndGlyphs" >Selecionar</text>
<path d="M990.5 95.4h3.6l-1.8 2.1z" fill="#666" />
<text x="924.5" y="113.9" font-size="9.8" fill="#303030" stroke="#303030" stroke-width="0.3" textLength="24.3" lengthAdjust="spacingAndGlyphs" >Edição</text>
<line x1="1000.5" y1="51" x2="1000.5" y2="114" stroke="#dadada" stroke-width="1" />
<path d="M1010 112.2l3.2-3.2 3.2 3.2" fill="none" stroke="#555" stroke-width="1.2" />
<rect x="0" y="152" width="1010" height="14" fill="#e6e6e6" />
<path d="M16.5 154.5v9h-9z" fill="#b7b7b7" />
<rect x="19" y="152" width="11.5" height="14" fill="#d5d5d5" />
<line x1="19" y1="165.5" x2="30.5" y2="165.5" stroke="#217346" stroke-width="1.4" />
<text x="21.65" y="162.7" font-size="9.7" fill="#217346" textLength="6.2" lengthAdjust="spacingAndGlyphs" >A</text>
<line x1="31" y1="154" x2="31" y2="166" stroke="#c6c6c6" stroke-width="1" />
<text x="31.15" y="162.7" font-size="9.7" fill="#333333" stroke="#333333" stroke-width="0.25" textLength="5.2" lengthAdjust="spacingAndGlyphs" >B</text>
<line x1="37.5" y1="154" x2="37.5" y2="166" stroke="#c6c6c6" stroke-width="1" />
<text x="74.75" y="162.7" font-size="9.7" fill="#333333" stroke="#333333" stroke-width="0.25" textLength="5.5" lengthAdjust="spacingAndGlyphs" >C</text>
<line x1="118.5" y1="154" x2="118.5" y2="166" stroke="#c6c6c6" stroke-width="1" />
<text x="176.5" y="162.7" font-size="9.7" fill="#333333" stroke="#333333" stroke-width="0.25" textLength="6" lengthAdjust="spacingAndGlyphs" >D</text>
<line x1="241.5" y1="154" x2="241.5" y2="166" stroke="#c6c6c6" stroke-width="1" />
<text x="250.1" y="162.7" font-size="9.7" fill="#333333" stroke="#333333" stroke-width="0.25" textLength="4.8" lengthAdjust="spacingAndGlyphs" >E</text>
<line x1="264.5" y1="154" x2="264.5" y2="166" stroke="#c6c6c6" stroke-width="1" />
<text x="297.2" y="162.7" font-size="9.7" fill="#333333" stroke="#333333" stroke-width="0.25" textLength="4.6" lengthAdjust="spacingAndGlyphs" >F</text>
<line x1="335.5" y1="154" x2="335.5" y2="166" stroke="#c6c6c6" stroke-width="1" />
<text x="367.4" y="162.7" font-size="9.7" fill="#333333" stroke="#333333" stroke-width="0.25" textLength="6.2" lengthAdjust="spacingAndGlyphs" >G</text>
<line x1="406.5" y1="154" x2="406.5" y2="166" stroke="#c6c6c6" stroke-width="1" />
<text x="438.5" y="162.7" font-size="9.7" fill="#333333" stroke="#333333" stroke-width="0.25" textLength="6" lengthAdjust="spacingAndGlyphs" >H</text>
<line x1="477.5" y1="154" x2="477.5" y2="166" stroke="#c6c6c6" stroke-width="1" />
<text x="511.9" y="162.7" font-size="9.7" fill="#333333" stroke="#333333" stroke-width="0.25" textLength="2.2" lengthAdjust="spacingAndGlyphs" >I</text>
<line x1="549.5" y1="154" x2="549.5" y2="166" stroke="#c6c6c6" stroke-width="1" />
<text x="617.7" y="162.7" font-size="9.7" fill="#333333" stroke="#333333" stroke-width="0.25" textLength="3.6" lengthAdjust="spacingAndGlyphs" >J</text>
<line x1="690.5" y1="154" x2="690.5" y2="166" stroke="#c6c6c6" stroke-width="1" />
<text x="722.8" y="162.7" font-size="9.7" fill="#333333" stroke="#333333" stroke-width="0.25" textLength="5.4" lengthAdjust="spacingAndGlyphs" >K</text>
<line x1="761.5" y1="154" x2="761.5" y2="166" stroke="#c6c6c6" stroke-width="1" />
<text x="787.3" y="162.7" font-size="9.7" fill="#333333" stroke="#333333" stroke-width="0.25" textLength="4.4" lengthAdjust="spacingAndGlyphs" >L</text>
<line x1="818.5" y1="154" x2="818.5" y2="166" stroke="#c6c6c6" stroke-width="1" />
<text x="834.2" y="162.7" font-size="9.7" fill="#333333" stroke="#333333" stroke-width="0.25" textLength="7.6" lengthAdjust="spacingAndGlyphs" >M</text>
<line x1="858.5" y1="154" x2="858.5" y2="166" stroke="#c6c6c6" stroke-width="1" />
<text x="883.9" y="162.7" font-size="9.7" fill="#333333" stroke="#333333" stroke-width="0.25" textLength="6.2" lengthAdjust="spacingAndGlyphs" >N</text>
<line x1="916.5" y1="154" x2="916.5" y2="166" stroke="#c6c6c6" stroke-width="1" />
<text x="941.2" y="162.7" font-size="9.7" fill="#333333" stroke="#333333" stroke-width="0.25" textLength="6.6" lengthAdjust="spacingAndGlyphs" >O</text>
<line x1="973.5" y1="154" x2="973.5" y2="166" stroke="#c6c6c6" stroke-width="1" />
<text x="999.9" y="162.7" font-size="9.7" fill="#333333" stroke="#333333" stroke-width="0.25" textLength="5.2" lengthAdjust="spacingAndGlyphs" >P</text>
<line x1="19.5" y1="152" x2="19.5" y2="166" stroke="#c6c6c6" stroke-width="1" />
<line x1="0" y1="166" x2="1008" y2="166" stroke="#bdbdbd" stroke-width="0.8" />
<rect x="0" y="166" width="19" height="372" fill="#e6e6e6" />
<rect x="0" y="166.5" width="19" height="34.5" fill="#d5d5d5" />
<line x1="18.8" y1="166.5" x2="18.8" y2="201" stroke="#217346" stroke-width="1.4" />
<line x1="0" y1="201" x2="19" y2="201" stroke="#c6c6c6" stroke-width="1" />
<text x="7.3" y="197.7" font-size="9.8" fill="#217346" textLength="4.2" lengthAdjust="spacingAndGlyphs" >1</text>
<line x1="0" y1="228" x2="19" y2="228" stroke="#c6c6c6" stroke-width="1" />
<text x="6.6" y="224.7" font-size="9.8" fill="#333333" stroke="#333333" stroke-width="0.25" textLength="5.6" lengthAdjust="spacingAndGlyphs" >2</text>
<line x1="0" y1="236.5" x2="19" y2="236.5" stroke="#c6c6c6" stroke-width="1" />
<text x="6.6" y="233.7" font-size="9.8" fill="#333333" stroke="#333333" stroke-width="0.25" textLength="5.6" lengthAdjust="spacingAndGlyphs" >3</text>
<line x1="0" y1="261" x2="19" y2="261" stroke="#c6c6c6" stroke-width="1" />
<text x="6.6" y="257.7" font-size="9.8" fill="#333333" stroke="#333333" stroke-width="0.25" textLength="5.6" lengthAdjust="spacingAndGlyphs" >4</text>
<line x1="0" y1="297" x2="19" y2="297" stroke="#c6c6c6" stroke-width="1" />
<text x="6.6" y="291.6" font-size="9.8" fill="#333333" stroke="#333333" stroke-width="0.25" textLength="5.6" lengthAdjust="spacingAndGlyphs" >5</text>
<line x1="0" y1="319.5" x2="19" y2="319.5" stroke="#c6c6c6" stroke-width="1" />
<text x="6.6" y="316.2" font-size="9.8" fill="#333333" stroke="#333333" stroke-width="0.25" textLength="5.6" lengthAdjust="spacingAndGlyphs" >7</text>
<line x1="0" y1="353.5" x2="19" y2="353.5" stroke="#c6c6c6" stroke-width="1" />
<text x="6.6" y="350.2" font-size="9.8" fill="#333333" stroke="#333333" stroke-width="0.25" textLength="5.6" lengthAdjust="spacingAndGlyphs" >8</text>
<line x1="0" y1="378" x2="19" y2="378" stroke="#c6c6c6" stroke-width="1" />
<text x="4.1" y="374.7" font-size="9.8" fill="#333333" stroke="#333333" stroke-width="0.25" textLength="10.6" lengthAdjust="spacingAndGlyphs" >10</text>
<line x1="0" y1="412" x2="19" y2="412" stroke="#c6c6c6" stroke-width="1" />
<text x="4.1" y="408.7" font-size="9.8" fill="#333333" stroke="#333333" stroke-width="0.25" textLength="10.6" lengthAdjust="spacingAndGlyphs" >11</text>
<line x1="0" y1="436" x2="19" y2="436" stroke="#c6c6c6" stroke-width="1" />
<text x="4.1" y="432.7" font-size="9.8" fill="#333333" stroke="#333333" stroke-width="0.25" textLength="10.6" lengthAdjust="spacingAndGlyphs" >13</text>
<line x1="0" y1="470" x2="19" y2="470" stroke="#c6c6c6" stroke-width="1" />
<text x="4.1" y="466.7" font-size="9.8" fill="#333333" stroke="#333333" stroke-width="0.25" textLength="10.6" lengthAdjust="spacingAndGlyphs" >14</text>
<line x1="0" y1="494" x2="19" y2="494" stroke="#c6c6c6" stroke-width="1" />
<text x="4.1" y="490.7" font-size="9.8" fill="#333333" stroke="#333333" stroke-width="0.25" textLength="10.6" lengthAdjust="spacingAndGlyphs" >16</text>
<line x1="0" y1="528" x2="19" y2="528" stroke="#c6c6c6" stroke-width="1" />
<text x="4.1" y="524.7" font-size="9.8" fill="#333333" stroke="#333333" stroke-width="0.25" textLength="10.6" lengthAdjust="spacingAndGlyphs" >17</text>
<line x1="0" y1="538" x2="19" y2="538" stroke="#c6c6c6" stroke-width="1" />
<line x1="0" y1="299" x2="19" y2="299" stroke="#c6c6c6" stroke-width="1" />
<line x1="0" y1="356.5" x2="19" y2="356.5" stroke="#c6c6c6" stroke-width="1" />
<line x1="0" y1="414.5" x2="19" y2="414.5" stroke="#c6c6c6" stroke-width="1" />
<line x1="0" y1="472.5" x2="19" y2="472.5" stroke="#c6c6c6" stroke-width="1" />
<line x1="0" y1="530" x2="19" y2="530" stroke="#c6c6c6" stroke-width="1" />
<line x1="19.5" y1="166" x2="19.5" y2="538" stroke="#bdbdbd" stroke-width="1" />
<rect x="0" y="226.5" width="18.8" height="2.2" fill="#e6e6e6" />
<line x1="0" y1="228" x2="19" y2="228" stroke="#c6c6c6" stroke-width="1" />
<rect x="19.3" y="166.1" width="988.5" height="35" fill="#404040" />
<rect x="19.3" y="201" width="988.5" height="27.2" fill="#6699cc" />
<line x1="20" y1="228.5" x2="1008" y2="228.5" stroke="#c9c9c9" stroke-width="1" />
<rect x="339.7" y="166.1" width="74.3" height="35.9" fill="#6699cc" />
<rect x="19.2" y="166.2" width="11.4" height="34.8" fill="none" stroke="#217346" stroke-width="1.5" />
<rect x="28.9" y="199.3" width="3.3" height="3.5" fill="#217346" stroke="#5a6f62" stroke-width="0.5" />
<path d="M33 178.5a3 3 0 0 1 3-3h4.5a3 3 0 0 1 3 3v6.5a3 3 0 0 1-3 3h-4.5a3 3 0 0 1-3-3z" fill="none" stroke="#fff" stroke-width="1.5" />
<path d="M36 190h4.4 M36.8 191.8h2.8" fill="none" stroke="#fff" stroke-width="1.1" />
<rect x="36.6" y="173.5" width="3.4" height="3" fill="#404040" />
<text x="47.7" y="186.8" font-size="10.9" fill="#fff" textLength="17.2" lengthAdjust="spacingAndGlyphs" stroke="#fff" stroke-width=".25">LUZ</text>
<line x1="68.8" y1="177.8" x2="68.8" y2="188.4" stroke="#8a8a8a" stroke-width="0.8" />
<text x="72" y="182.3" font-size="4" fill="#cfcfcf" textLength="17.4" lengthAdjust="spacingAndGlyphs" >Planilhas</text>
<text x="72" y="187" font-size="4" fill="#cfcfcf" textLength="25" lengthAdjust="spacingAndGlyphs" >Empresariais</text>
<text x="141.8" y="187.2" font-size="8.7" fill="#fff" font-weight="700" textLength="27" lengthAdjust="spacingAndGlyphs" >CAPEX</text>
<text x="217.75" y="187.2" font-size="8.7" fill="#fff" font-weight="700" textLength="22.5" lengthAdjust="spacingAndGlyphs" >OPEX</text>
<text x="276.5" y="187.2" font-size="8.7" fill="#fff" font-weight="700" textLength="52" lengthAdjust="spacingAndGlyphs" >RELATÓRIOS</text>
<text x="350" y="187.2" font-size="8.7" fill="#fff" font-weight="700" textLength="53" lengthAdjust="spacingAndGlyphs" >DASHBOARD</text>
<text x="425" y="187.2" font-size="8.7" fill="#fff" font-weight="700" textLength="52" lengthAdjust="spacingAndGlyphs" >INSTRUÇÕES</text>
<rect x="97" y="207" width="88.5" height="21.5" fill="#fff" />
<text x="114.5" y="221.2" font-size="8.7" fill="#404040" font-weight="700" textLength="53" lengthAdjust="spacingAndGlyphs" >DASHBOARD</text>
<text x="49" y="253.6" font-size="11" fill="#000" font-weight="700" textLength="44.3" lengthAdjust="spacingAndGlyphs" >Receitas</text>
<rect x="37.5" y="261.5" width="204.5" height="33.5" fill="#f2f2f2" stroke="#dddddd" stroke-width="1" />
<text x="71.7" y="286.6" font-size="22" fill="#000" font-weight="700" textLength="137.3" lengthAdjust="spacingAndGlyphs" >R$ 163.000,00</text>
<text x="49" y="314" font-size="11" fill="#000" font-weight="700" textLength="33.4" lengthAdjust="spacingAndGlyphs" >CAPEX</text>
<rect x="37.5" y="319.8" width="204.5" height="33.5" fill="#f2f2f2" stroke="#dddddd" stroke-width="1" />
<text x="77.7" y="345.1" font-size="22" fill="#000" font-weight="700" textLength="125.2" lengthAdjust="spacingAndGlyphs" >R$ 69.500,00</text>
<text x="49" y="372.6" font-size="11" fill="#000" font-weight="700" textLength="28.4" lengthAdjust="spacingAndGlyphs" >OPEX</text>
<rect x="37.5" y="378.3" width="204.5" height="33.5" fill="#f2f2f2" stroke="#dddddd" stroke-width="1" />
<text x="77.7" y="403.6" font-size="22" fill="#000" font-weight="700" textLength="125.2" lengthAdjust="spacingAndGlyphs" >R$ 53.600,00</text>
<text x="49" y="430.5" font-size="11" fill="#000" font-weight="700" textLength="74.2" lengthAdjust="spacingAndGlyphs" >Outros Custos</text>
<rect x="37.5" y="436.8" width="204.5" height="33.5" fill="#f2f2f2" stroke="#dddddd" stroke-width="1" />
<text x="77.9" y="461.6" font-size="22" fill="#000" font-weight="700" textLength="125" lengthAdjust="spacingAndGlyphs" >R$ 26.000,00</text>
<text x="49" y="489.2" font-size="11" fill="#000" font-weight="700" textLength="52.5" lengthAdjust="spacingAndGlyphs" >Resultado</text>
<rect x="37.5" y="495.8" width="204.5" height="33" fill="#4daa3c" />
<text x="77.9" y="520.1" font-size="22" fill="#fff" font-weight="700" textLength="125" lengthAdjust="spacingAndGlyphs" >R$ 13.900,00</text>
<text x="276" y="251" font-size="11.2" fill="#000" font-weight="700" textLength="72.5" lengthAdjust="spacingAndGlyphs" >CAPEX x OPEX</text>
<text x="276" y="400" font-size="11.2" fill="#000" font-weight="700" textLength="52.4" lengthAdjust="spacingAndGlyphs" >Resultado</text>
<text x="772.6" y="250.7" font-size="11.2" fill="#000" font-weight="700" textLength="133.5" lengthAdjust="spacingAndGlyphs" >Percentual CAPEX x OPEX</text>
<rect x="255.5" y="256.5" width="490" height="120.5" fill="#fff" stroke="#dedede" stroke-width="1" />
<rect x="269" y="269" width="429.5" height="89.5" fill="#f2f2f2" />
<rect x="283.4" y="315.573" width="37.9" height="42.9273" fill="#f04530" />
<rect x="325.3" y="328.093" width="37.9" height="30.4068" fill="#ffc000" />
<text x="286.65" y="309.373" font-size="7.5" fill="#333" textLength="31.5" lengthAdjust="spacingAndGlyphs" >R$12.000</text>
<text x="330.55" y="321.893" font-size="7.5" fill="#333" textLength="27.5" lengthAdjust="spacingAndGlyphs" >R$8.500</text>
<rect x="390.2" y="279.8" width="37.9" height="78.7" fill="#f04530" />
<rect x="432.1" y="309.134" width="37.9" height="49.3664" fill="#ffc000" />
<text x="393.45" y="273.6" font-size="7.5" fill="#333" textLength="31.5" lengthAdjust="spacingAndGlyphs" >R$22.000</text>
<text x="435.35" y="302.934" font-size="7.5" fill="#333" textLength="31.5" lengthAdjust="spacingAndGlyphs" >R$13.800</text>
<rect x="497.2" y="301.264" width="37.9" height="57.2364" fill="#f04530" />
<rect x="539.1" y="305.556" width="37.9" height="52.9436" fill="#ffc000" />
<text x="500.45" y="295.064" font-size="7.5" fill="#333" textLength="31.5" lengthAdjust="spacingAndGlyphs" >R$16.000</text>
<text x="542.35" y="299.356" font-size="7.5" fill="#333" textLength="31.5" lengthAdjust="spacingAndGlyphs" >R$14.800</text>
<rect x="604.3" y="288.743" width="37.9" height="69.7568" fill="#f04530" />
<rect x="646.2" y="299.475" width="37.9" height="59.025" fill="#ffc000" />
<text x="607.55" y="282.543" font-size="7.5" fill="#333" textLength="31.5" lengthAdjust="spacingAndGlyphs" >R$19.500</text>
<text x="649.45" y="293.275" font-size="7.5" fill="#333" textLength="31.5" lengthAdjust="spacingAndGlyphs" >R$16.500</text>
<line x1="269" y1="358.5" x2="697.8" y2="358.5" stroke="#8c8c8c" stroke-width="0.9" />
<line x1="269" y1="358.5" x2="269" y2="361.7" stroke="#8c8c8c" stroke-width="0.9" />
<line x1="376.1" y1="358.5" x2="376.1" y2="361.7" stroke="#8c8c8c" stroke-width="0.9" />
<line x1="483.2" y1="358.5" x2="483.2" y2="361.7" stroke="#8c8c8c" stroke-width="0.9" />
<line x1="590.3" y1="358.5" x2="590.3" y2="361.7" stroke="#8c8c8c" stroke-width="0.9" />
<line x1="697.4" y1="358.5" x2="697.4" y2="361.7" stroke="#8c8c8c" stroke-width="0.9" />
<text x="300.8" y="371.8" font-size="7.9" fill="#333" textLength="45" lengthAdjust="spacingAndGlyphs" >1º Trimestre</text>
<text x="407.8" y="371.8" font-size="7.9" fill="#333" textLength="45" lengthAdjust="spacingAndGlyphs" >2º Trimestre</text>
<text x="514.8" y="371.8" font-size="7.9" fill="#333" textLength="45" lengthAdjust="spacingAndGlyphs" >3º Trimestre</text>
<text x="621.8" y="371.8" font-size="7.9" fill="#333" textLength="45" lengthAdjust="spacingAndGlyphs" >4º Trimestre</text>
<rect x="705" y="305.8" width="5.5" height="5.5" fill="#f04530" />
<text x="712.5" y="311.4" font-size="7.8" fill="#333" textLength="23.2" lengthAdjust="spacingAndGlyphs" >CAPEX</text>
<rect x="705" y="321.4" width="5.5" height="5.5" fill="#ffc000" />
<text x="712.5" y="327" font-size="7.8" fill="#333" textLength="19.5" lengthAdjust="spacingAndGlyphs" >OPEX</text>
<rect x="255.5" y="408.3" width="490" height="122.2" fill="#fff" stroke="#dedede" stroke-width="1" />
<rect x="270" y="420.7" width="462.4" height="103.4" fill="#f2f2f2" />
<rect x="294.8" y="424.93" width="67.2" height="40.77" fill="#6699cc" />
<text x="312.65" y="418.43" font-size="7.5" fill="#333" textLength="31.5" lengthAdjust="spacingAndGlyphs" >R$13.500</text>
<rect x="410.4" y="465.7" width="67.2" height="46.6" fill="#6699cc" />
<text x="426.75" y="523.5" font-size="7.5" fill="#333" textLength="34.5" lengthAdjust="spacingAndGlyphs" >-R$15.800</text>
<rect x="525.4" y="449.996" width="67.2" height="15.704" fill="#6699cc" />
<text x="545.25" y="443.496" font-size="7.5" fill="#333" textLength="27.5" lengthAdjust="spacingAndGlyphs" >R$5.200</text>
<rect x="641.3" y="432.48" width="67.2" height="33.22" fill="#6699cc" />
<text x="659.15" y="425.98" font-size="7.5" fill="#333" textLength="31.5" lengthAdjust="spacingAndGlyphs" >R$11.000</text>
<line x1="270" y1="465.7" x2="732.8" y2="465.7" stroke="#8c8c8c" stroke-width="0.9" />
<line x1="270" y1="465.7" x2="270" y2="468.9" stroke="#8c8c8c" stroke-width="0.9" />
<line x1="385.6" y1="465.7" x2="385.6" y2="468.9" stroke="#8c8c8c" stroke-width="0.9" />
<line x1="501.2" y1="465.7" x2="501.2" y2="468.9" stroke="#8c8c8c" stroke-width="0.9" />
<line x1="616.8" y1="465.7" x2="616.8" y2="468.9" stroke="#8c8c8c" stroke-width="0.9" />
<line x1="732.5" y1="465.7" x2="732.5" y2="468.9" stroke="#8c8c8c" stroke-width="0.9" />
<text x="305.7" y="478.6" font-size="7.9" fill="#333" textLength="45" lengthAdjust="spacingAndGlyphs" >1º Trimestre</text>
<text x="421.2" y="478.6" font-size="7.9" fill="#333" textLength="45" lengthAdjust="spacingAndGlyphs" >2º Trimestre</text>
<text x="536.7" y="478.6" font-size="7.9" fill="#333" textLength="45" lengthAdjust="spacingAndGlyphs" >3º Trimestre</text>
<text x="652.2" y="478.6" font-size="7.9" fill="#333" textLength="45" lengthAdjust="spacingAndGlyphs" >4º Trimestre</text>
<rect x="760" y="256" width="217.5" height="274.3" fill="#f2f2f2" stroke="#dcdcdc" stroke-width="1" />
<path d="M889.60 471.65A93 93 0 1 1 886.58 289.25L876.99 341.98A39.4 39.4 0 1 0 878.28 419.26Z" fill="#f04530" stroke="#f2f2f2" stroke-width="0.8" />
<path d="M886.58 289.25A93 93 0 0 1 889.60 471.65L878.28 419.26A39.4 39.4 0 0 0 876.99 341.98Z" fill="#f2b705" stroke="#f2f2f2" stroke-width="0.8" />
<text x="797" y="384.7" font-size="7.4" fill="#fff" textLength="14" lengthAdjust="spacingAndGlyphs" >56%</text>
<text x="929" y="382" font-size="7.4" fill="#fff" textLength="14" lengthAdjust="spacingAndGlyphs" >44%</text>
<rect x="838.9" y="503.2" width="4.2" height="4.2" fill="#f04530" />
<text x="845.8" y="508" font-size="7.6" fill="#333" textLength="23.2" lengthAdjust="spacingAndGlyphs" >CAPEX</text>
<rect x="877" y="503.2" width="4.2" height="4.2" fill="#f2b705" />
<text x="883.5" y="508" font-size="7.6" fill="#333" textLength="19.6" lengthAdjust="spacingAndGlyphs" >OPEX</text>
<rect x="1008" y="152" width="16" height="386" fill="#e6e6e6" />
<rect x="1010.4" y="165" width="11" height="373" fill="#dbdbdb" />
<rect x="1010.5" y="154" width="10.8" height="10" fill="#fff" stroke="#b5b5b5" stroke-width="0.8" />
<path d="M1013 160.8l2.9-3 2.9 3z" fill="#666" />
<rect x="1010.5" y="165.8" width="10.8" height="11.4" fill="#fff" stroke="#b5b5b5" stroke-width="0.8" />
<rect x="1010.5" y="527.5" width="10.8" height="10" fill="#fff" stroke="#b5b5b5" stroke-width="0.8" />
<path d="M1013 531l2.9 3 2.9-3z" fill="#666" />
<rect x="0" y="538.3" width="1024" height="20.6" fill="#e6e6e6" />
<line x1="0" y1="538.3" x2="1024" y2="538.3" stroke="#c6c6c6" stroke-width="0.9" />
<path d="M25 545l-3 3 3 3z" fill="#c4c4c4" />
<path d="M42.5 545l3 3-3 3z" fill="#c4c4c4" />
<line x1="76" y1="541" x2="76" y2="555" stroke="#b0b0b0" stroke-width="1" />
<line x1="121.5" y1="541" x2="121.5" y2="555" stroke="#b0b0b0" stroke-width="1" />
<line x1="165" y1="541" x2="165" y2="555" stroke="#b0b0b0" stroke-width="1" />
<line x1="211.5" y1="541" x2="211.5" y2="555" stroke="#b0b0b0" stroke-width="1" />
<line x1="340" y1="541" x2="340" y2="555" stroke="#b0b0b0" stroke-width="1" />
<line x1="379" y1="541" x2="379" y2="555" stroke="#b0b0b0" stroke-width="1" />
<line x1="416" y1="541" x2="416" y2="555" stroke="#b0b0b0" stroke-width="1" />
<line x1="451.5" y1="541" x2="451.5" y2="555" stroke="#b0b0b0" stroke-width="1" />
<text x="84" y="551.1" font-size="10" fill="#555" textLength="27" lengthAdjust="spacingAndGlyphs" >Capex</text>
<text x="130" y="551.1" font-size="10" fill="#555" textLength="23" lengthAdjust="spacingAndGlyphs" >Opex</text>
<text x="173" y="551.1" font-size="10" fill="#555" textLength="27.5" lengthAdjust="spacingAndGlyphs" >Rel_fin</text>
<text x="221" y="551.1" font-size="10" fill="#555" textLength="36" lengthAdjust="spacingAndGlyphs" >Rel_com</text>
<rect x="267.5" y="538.2" width="41" height="17" fill="#fff" />
<line x1="267.5" y1="538.3" x2="267.5" y2="555" stroke="#c6c6c6" stroke-width="0.8" />
<line x1="308.5" y1="538.3" x2="308.5" y2="555" stroke="#c6c6c6" stroke-width="0.8" />
<rect x="267.5" y="554.8" width="41" height="1.7" fill="#217346" />
<text x="277" y="551.1" font-size="10" fill="#217346" font-weight="700" textLength="22" lengthAdjust="spacingAndGlyphs" >Dash</text>
<text x="318" y="551.1" font-size="10" fill="#555" textLength="12" lengthAdjust="spacingAndGlyphs" >INI</text>
<text x="349" y="551.1" font-size="10" fill="#555" textLength="19.5" lengthAdjust="spacingAndGlyphs" >DUV</text>
<text x="388" y="551.1" font-size="10" fill="#555" textLength="18" lengthAdjust="spacingAndGlyphs" >SUG</text>
<text x="425.5" y="551.1" font-size="10" fill="#555" textLength="16" lengthAdjust="spacingAndGlyphs" >LUZ</text>
<circle cx="481.4" cy="547.8" r="6" fill="none" stroke="#6a6a6a" stroke-width="1"/>
<path d="M478.2 547.8h6.4 M481.4 544.6v6.4" fill="none" stroke="#6a6a6a" stroke-width="1.1" />
<rect x="845" y="544" width="1" height="1.4" fill="#9a9a9a" />
<rect x="845" y="547.2" width="1" height="1.4" fill="#9a9a9a" />
<rect x="845" y="550.4" width="1" height="1.4" fill="#9a9a9a" />
<rect x="857.5" y="543" width="150.5" height="11" fill="#d6d6d6" />
<rect x="857.5" y="543" width="10.8" height="11" fill="#fff" stroke="#b5b5b5" stroke-width="0.8" />
<path d="M864.3 545.7l-3 2.8 3 2.8z" fill="#444" />
<rect x="868.3" y="543" width="78.7" height="11" fill="#fff" stroke="#b5b5b5" stroke-width="0.8" />
<rect x="996.7" y="543" width="11" height="11" fill="#fff" stroke="#b5b5b5" stroke-width="0.8" />
<path d="M1001 545.7l3 2.8-3 2.8z" fill="#444" />
<rect x="0" y="558.8" width="1024" height="15.6" fill="#f3f3f3" />
<text x="5" y="570.1" font-size="9.6" fill="#333" textLength="26" lengthAdjust="spacingAndGlyphs" >Pronto</text>
<rect x="48.6" y="563.2" width="7.6" height="8.2" fill="#fff" stroke="#777" stroke-width="0.8" />
<rect x="48.6" y="563.2" width="7.6" height="2" fill="#777" />
<line x1="51.1" y1="565" x2="51.1" y2="571.4" stroke="#999" stroke-width="0.7" />
<line x1="53.6" y1="565" x2="53.6" y2="571.4" stroke="#999" stroke-width="0.7" />
<line x1="48.6" y1="567.4" x2="56.2" y2="567.4" stroke="#aaa" stroke-width="0.6" />
<line x1="48.6" y1="569.4" x2="56.2" y2="569.4" stroke="#aaa" stroke-width="0.6" />
<circle cx="48.8" cy="563.5" r="2.2" fill="#555" stroke="#f3f3f3" stroke-width=".6"/>
<rect x="814.5" y="558.8" width="27.7" height="15.6" fill="#c6c6c6" />
<rect x="824" y="562.2" width="8.6" height="8.2" fill="none" stroke="#555" stroke-width="0.9" />
<line x1="826.9" y1="562.2" x2="826.9" y2="570.4" stroke="#555" stroke-width="0.8" />
<line x1="829.8" y1="562.2" x2="829.8" y2="570.4" stroke="#555" stroke-width="0.8" />
<line x1="824" y1="565" x2="832.6" y2="565" stroke="#555" stroke-width="0.8" />
<line x1="824" y1="567.7" x2="832.6" y2="567.7" stroke="#555" stroke-width="0.8" />
<rect x="852.5" y="562.2" width="8.6" height="8.4" fill="none" stroke="#666" stroke-width="0.9" />
<rect x="854.7" y="564.3" width="4.2" height="4.2" fill="none" stroke="#888" stroke-width="0.8" />
<path d="M880.5 562.2v8.4h9.2v-8.4z M883.6 562.2v4.4h3.4v-4.4" fill="none" stroke="#666" stroke-width="0.9" />
<line x1="902.8" y1="566.5" x2="907.2" y2="566.5" stroke="#555" stroke-width="1.2" />
<line x1="911" y1="566.5" x2="985" y2="566.5" stroke="#8f8f8f" stroke-width="0.8" />
<line x1="948" y1="564.5" x2="948" y2="568.5" stroke="#8f8f8f" stroke-width="0.8" />
<rect x="943" y="562" width="3" height="9" fill="#555" />
<path d="M988.8 566.5h5 M991.3 564v5" fill="none" stroke="#555" stroke-width="1.2" />
<text x="1002.5" y="570.1" font-size="9.4" fill="#333" textLength="15.5" lengthAdjust="spacingAndGlyphs" >90%</text>
<rect x="0" y="574.2" width="1024" height="1.8" fill="#262626" />
<rect x="0" y="574.2" width="36" height="1.8" fill="#000" />
<rect x="36" y="574.2" width="257.5" height="1.8" fill="#cfcfcf" />
</svg>
</body></html>
